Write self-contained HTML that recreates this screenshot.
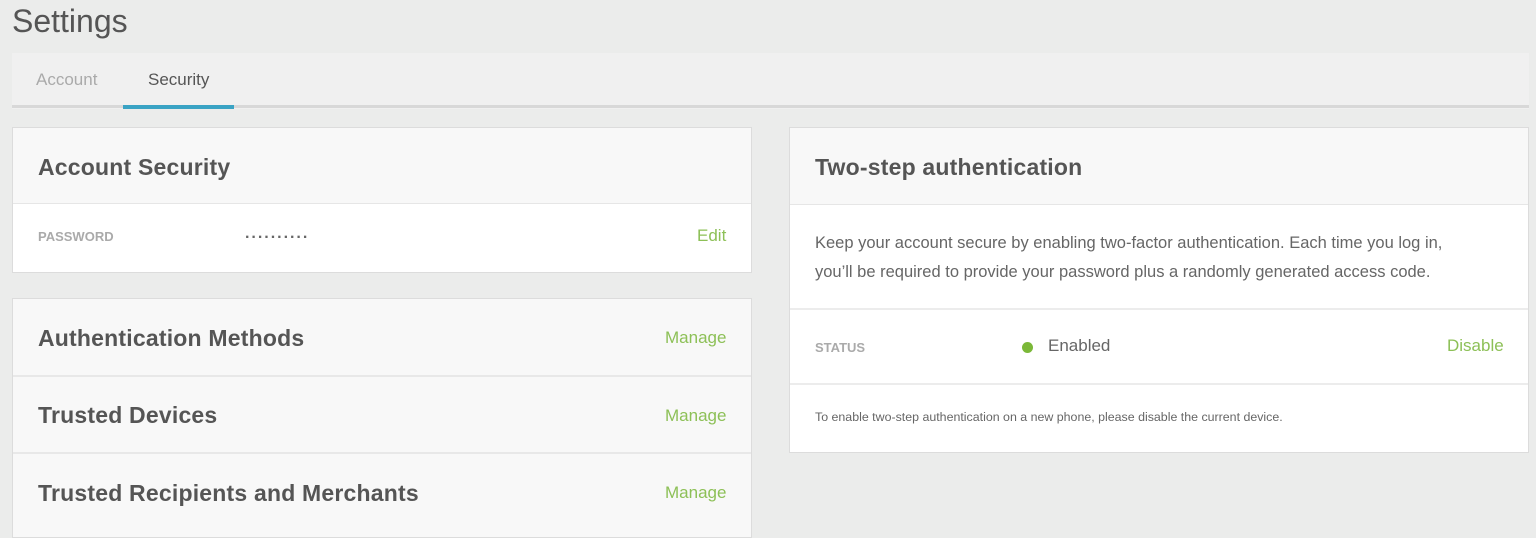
<!DOCTYPE html>
<html><head><style>
*{margin:0;padding:0;box-sizing:border-box}
body{width:1536px;height:528px;overflow:hidden;background:#ebeceb;font-family:"Liberation Sans",sans-serif;color:#555;position:relative}
.a{position:absolute}
.card{position:absolute;background:#fff;border:1px solid #dcdcdc}
.hd{background:#f8f8f8;border-bottom:1px solid #e6e6e6;position:absolute;left:0;right:0}
h2{position:absolute;font-size:23px;font-weight:bold;color:#555;letter-spacing:0.2px}
.lbl{position:absolute;font-size:13px;font-weight:bold;color:#aaa}
.g{position:absolute;color:#8dc057;font-size:17px}
</style></head><body>
<div class="a" style="left:12px;top:3px;font-size:32px;color:#555">Settings</div>
<div class="a" style="left:12px;top:53px;width:1517px;height:56px;background:#f0f0f0"></div>
<div class="a" style="left:12px;top:105px;width:1517px;height:3px;background:#d8d8d8"></div>
<div class="a" style="left:123px;top:105px;width:111px;height:4px;background:#3aa3c4"></div>
<div class="a" style="left:36px;top:70px;font-size:17px;color:#aaa">Account</div>
<div class="a" style="left:148px;top:70px;font-size:17px;color:#555">Security</div>

<div class="card" style="left:12px;top:127px;width:740px;height:146px">
 <div class="hd" style="top:0;height:76px"></div>
 <h2 style="left:25px;top:26px">Account Security</h2>
 <div class="lbl" style="left:25px;top:101px">PASSWORD</div>
 <div class="a" style="left:232px;top:101px;font-size:16px;font-weight:bold;color:#666;letter-spacing:1.1px">··········</div>
 <div class="g" style="left:684px;top:98px">Edit</div>
</div>

<div class="card" style="left:12px;top:298px;width:740px;height:240px;background:#f8f8f8">
 <h2 style="left:25px;top:26px">Authentication Methods</h2>
 <div class="g" style="left:652px;top:29px">Manage</div>
 <div class="a" style="left:0;right:0;top:76px;height:2px;background:#e8e8e8"></div>
 <h2 style="left:25px;top:103px">Trusted Devices</h2>
 <div class="g" style="left:652px;top:107px">Manage</div>
 <div class="a" style="left:0;right:0;top:153px;height:2px;background:#e8e8e8"></div>
 <h2 style="left:25px;top:181px">Trusted Recipients and Merchants</h2>
 <div class="g" style="left:652px;top:184px">Manage</div>
</div>

<div class="card" style="left:789px;top:127px;width:740px;height:326px">
 <div class="hd" style="top:0;height:77px"></div>
 <h2 style="left:25px;top:26px">Two-step authentication</h2>
 <div class="a" style="left:25px;top:101px;width:668px;font-size:16.5px;line-height:29px;color:#666">Keep your account secure by enabling two-factor authentication. Each time you log in, you’ll be required to provide your password plus a randomly generated access code.</div>
 <div class="a" style="left:0;right:0;top:180px;height:2px;background:#ececec"></div>
 <div class="lbl" style="left:25px;top:212px">STATUS</div>
 <div class="a" style="left:232px;top:214px;width:11px;height:11px;border-radius:50%;background:#7bb838"></div>
 <div class="a" style="left:258px;top:208px;font-size:17px;color:#666">Enabled</div>
 <div class="g" style="left:657px;top:208px">Disable</div>
 <div class="a" style="left:0;right:0;top:255px;height:2px;background:#ececec"></div>
 <div class="a" style="left:25px;top:282px;font-size:12.4px;color:#666">To enable two-step authentication on a new phone, please disable the current device.</div>
</div>
</body></html>
